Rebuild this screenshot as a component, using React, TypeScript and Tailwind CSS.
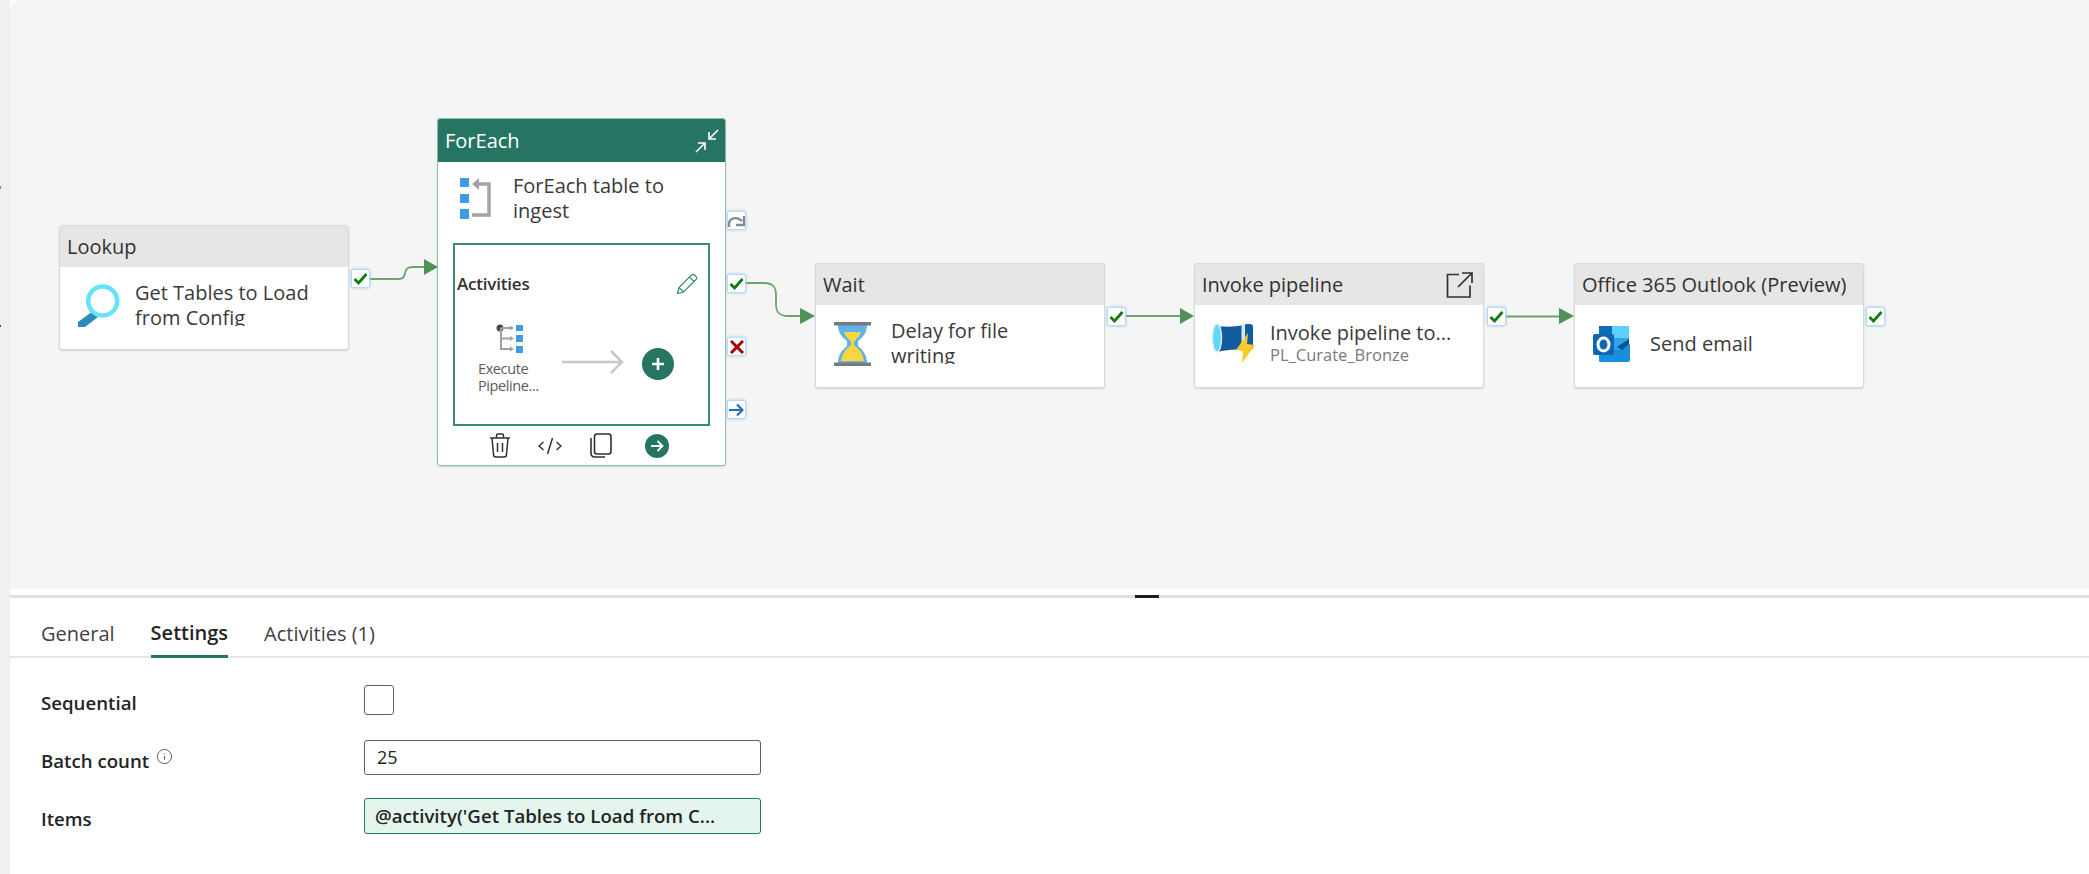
import type { ReactNode } from "react";
import { Info } from "lucide-react";

const font = "font-['Open_Sans','Liberation_Sans',sans-serif]";

function Port({ className, children }: { className: string; children: ReactNode }) {
  return (
    <div
      className={`absolute flex h-[19px] w-[19px] items-center justify-center rounded-[2px] border border-[#bcd9f2] bg-white shadow-[0_0_3px_#9cc5ee] ${className}`}
    >
      {children}
    </div>
  );
}

function CheckMark() {
  return (
    <svg width="15" height="13" viewBox="0 0 15 13">
      <path d="M1.5 7l4 4 8-9" fill="none" stroke="#107c10" strokeWidth="2.8" />
    </svg>
  );
}

function NodeCard({
  className,
  title,
  action,
  children,
}: {
  className: string;
  title: string;
  action?: ReactNode;
  children: ReactNode;
}) {
  return (
    <div
      className={`absolute flex h-[125px] w-[290px] flex-col overflow-hidden rounded-[3px] border border-[#d9d9d9] bg-white shadow-[0_1px_2px_rgba(0,0,0,0.14)] ${className}`}
    >
      <div className="flex h-[41px] shrink-0 items-center justify-between bg-[#e6e6e6] pl-[7px] pr-[10px] text-[20px] text-[#323130]">
        <span className="whitespace-nowrap">{title}</span>
        {action}
      </div>
      <div className="flex flex-1 items-start">{children}</div>
    </div>
  );
}

function NodeLabel({ children }: { children: ReactNode }) {
  return (
    <div className="h-[46px] w-[176px] overflow-hidden text-[20px] leading-[25px] text-[#3b3a39]">
      {children}
    </div>
  );
}

function LookupIcon() {
  return (
    <svg width="44" height="44" viewBox="0 0 44 44">
      <path d="M2 43v-5l15-11 5 6-13 10z" fill="#2a8dbb" />
      <circle cx="26.700" cy="17" r="14.500" fill="none" stroke="#66e3fb" strokeWidth="4.500" />
    </svg>
  );
}

function WaitIcon() {
  return (
    <svg width="37" height="44" viewBox="0 0 37 44">
      <path d="M4 3h29c0 8-4 12-9 16v5c5 4 9 9 9 17H4c0-8 4-13 9-17v-5C8 15 4 11 4 3z" fill="#5fb3ee" />
      <path d="M10 10h17c-1 4-5 7-7 10v3c3 3 9 7 10 16H7c1-9 7-13 10-16v-3c-2-3-6-6-7-10z" fill="#fdd63d" />
      <rect x="0" y="0" width="37" height="3.500" fill="#7a7a7a" />
      <rect x="0" y="40.500" width="37" height="3.500" fill="#7a7a7a" />
    </svg>
  );
}

function PipelineIcon() {
  return (
    <svg width="46" height="44" viewBox="0 0 46 44">
      <rect x="33" y="2" width="9" height="26" rx="3" fill="#0f5ea3" />
      <path d="M6 4c9 1 18 1 26-1v25c-8-1-17 0-26 2z" fill="#125b9f" />
      <rect x="30.500" y="1.500" width="3.500" height="27" rx="1.500" fill="#dbe8f2" />
      <ellipse cx="6" cy="16" rx="4.500" ry="14" fill="#5ed8f8" stroke="#dcebf5" strokeWidth="1.500" />
      <path d="M37 11L25 28l7 1-1 12 13-18-8-1z" fill="#fcc92c" />
    </svg>
  );
}

function OutlookIcon() {
  return (
    <svg width="37" height="38" viewBox="0 0 37 38">
      <rect x="6" y="1" width="26" height="36" rx="2" fill="#1a86d8" />
      <rect x="6" y="1" width="13" height="12" fill="#0f6cbd" />
      <rect x="19" y="1" width="17" height="12" fill="#5cd1fb" />
      <rect x="19" y="13" width="17" height="12" fill="#2da5ec" />
      <path d="M6 20l15 8 16-9v16a2 2 0 0 1-2 2H8a2 2 0 0 1-2-2z" fill="#1490df" />
      <path d="M36 19v-5l-12 8 5 3z" fill="#0a4e8c" />
      <rect x="0" y="9" width="21" height="21" rx="2" fill="#0f66b5" />
      <ellipse cx="10.500" cy="19.500" rx="5.500" ry="6.500" fill="none" stroke="#fff" strokeWidth="3" />
    </svg>
  );
}

function ForEachIcon() {
  return (
    <svg width="31" height="42" viewBox="0 0 31 42">
      <rect x="0" y="0" width="9" height="9" fill="#3f9ae8" />
      <rect x="0" y="16" width="9" height="9" fill="#3f9ae8" />
      <rect x="0" y="31" width="9" height="10" fill="#3f9ae8" />
      <path d="M14 6h15v31H12" fill="none" stroke="#a3a3a3" strokeWidth="3.500" />
      <path d="M19 0l-7 6 7 6z" fill="#a3a3a3" />
    </svg>
  );
}

function ExecuteIcon() {
  return (
    <svg width="27" height="29" viewBox="0 0 27 29">
      <circle cx="4" cy="4" r="3.500" fill="#4a4a4a" />
      <path d="M5 4v21h11M5 4h11M5 14.500h11" fill="none" stroke="#a0a0a0" strokeWidth="2" />
      <path d="M14 1.500l4 2.500-4 2.500zM14 12l4 2.500-4 2.500zM14 22.500l4 2.500-4 2.500z" fill="#a0a0a0" />
      <rect x="20" y="1" width="7" height="6" fill="#3f9ae8" />
      <rect x="20" y="11" width="7" height="7" fill="#3f9ae8" />
      <rect x="20" y="22" width="7" height="7" fill="#3f9ae8" />
    </svg>
  );
}

function ForEachNode() {
  return (
    <div className="absolute left-[427px] top-[118px] flex h-[348px] w-[289px] flex-col overflow-hidden rounded-[3px] border border-[#8dbcb0] bg-white shadow-[0_1px_2px_rgba(0,0,0,0.14)]">
      <div className="flex h-[43px] shrink-0 items-center justify-between bg-[#267563] pl-[7px] pr-[5px] text-[20px] text-white">
        <span>ForEach</span>
        <svg width="26" height="26" viewBox="0 0 26 26" fill="none" stroke="#fff" strokeWidth="1.600">
          <path d="M15 11l9-9M15 4v7h7M11 15l-9 9M4 15h7v7" />
        </svg>
      </div>
      <div className="flex h-[81px] shrink-0 items-start pl-[22px] pt-[16px]">
        <ForEachIcon />
        <div className="-mt-[5px] ml-[22px] w-[190px] text-[20px] leading-[25px] text-[#3b3a39]">
          ForEach table to ingest
        </div>
      </div>
      <div className="mx-[15px] flex h-[183px] shrink-0 flex-col border-2 border-[#3d8a78] px-[2px]">
        <div className="mt-[26px] flex items-center justify-between pr-[8px]">
          <span className="text-[17px] font-semibold tracking-[-0.2px] text-[#323130]">Activities</span>
          <svg width="22" height="22" viewBox="0 0 22 22" fill="none" stroke="#3d8a78" strokeWidth="1.200">
            <path d="M1.500 20.500l1.500-6L15.500 2a2 2 0 0 1 3 0l1.500 1.500a2 2 0 0 1 0 3L7.500 19zM3 14.500L7.500 19M13.500 4l4.500 4.500" />
          </svg>
        </div>
        <div className="mt-[27px] flex items-center">
          <div className="ml-[21px] flex w-[72px] flex-col">
            <div className="ml-[18px]">
              <ExecuteIcon />
            </div>
            <div className="mt-[7px] whitespace-nowrap text-[14.500px] leading-[17px] tracking-[-0.4px] text-[#5c5c5c]">
              Execute
              <br />
              Pipeline...
            </div>
          </div>
          <svg className="ml-[11px] mt-[6px]" width="64" height="26" viewBox="0 0 64 26" fill="none" stroke="#c8c8c8" strokeWidth="2.500">
            <path d="M1 13h60M50 2l11 11-11 11" />
          </svg>
          <div className="ml-[17px] mt-[10px] flex h-[32px] w-[32px] items-center justify-center rounded-full bg-[#267563]">
            <svg width="16" height="16" viewBox="0 0 16 16" stroke="#fff" strokeWidth="2.600">
              <path d="M8 2v12M2 8h12" />
            </svg>
          </div>
        </div>
      </div>
      <div className="flex flex-1 items-center pl-[51px]">
        <svg width="22" height="25" viewBox="0 0 22 25" fill="none" stroke="#323130" strokeWidth="1.500">
          <path d="M1 5h20M7.500 5V2.500a1.500 1.500 0 0 1 1.500-1.500h4a1.500 1.500 0 0 1 1.500 1.500V5M3 5l1.500 16.500a2.500 2.500 0 0 0 2.500 2.500h8a2.500 2.500 0 0 0 2.500-2.500L19 5M8.500 10v9M13.500 10v9" />
        </svg>
        <svg className="ml-[27px]" width="24" height="18" viewBox="0 0 24 18" fill="none" stroke="#323130" strokeWidth="1.500">
          <path d="M5.500 5L1 9l4.500 4M18.500 5L23 9l-4.500 4M14.500 1l-5 16" />
        </svg>
        <svg className="ml-[28px]" width="22" height="25" viewBox="0 0 22 25" fill="none" stroke="#323130" strokeWidth="1.600">
          <rect x="4.500" y="1" width="16.500" height="20" rx="2.500" />
          <path d="M1 5v15.500A3.500 3.500 0 0 0 4.500 24H15" />
        </svg>
        <div className="ml-[33px] flex h-[24px] w-[24px] items-center justify-center rounded-full bg-[#267563]">
          <svg width="14" height="14" viewBox="0 0 14 14" fill="none" stroke="#fff" strokeWidth="1.800">
            <path d="M1 7h11M7.500 2l5 5-5 5" />
          </svg>
        </div>
      </div>
    </div>
  );
}

function Connectors() {
  return (
    <svg className="absolute left-0 top-0" width="2079" height="589" viewBox="0 0 2079 589" fill="none">
      <g stroke="#6aa56f" strokeWidth="1.800">
        <path d="M359 279h27c8 0 8-2 9-6 1-4 2-6 8-6h12" />
        <path d="M735 283h19c9 0 12 4 12 12v9c0 8 3 12 12 12h13" />
        <path d="M1115 316h57" />
        <path d="M1495 316.500h56" />
      </g>
      <g fill="#4f9157">
        <path d="M414 259l14 8-14 8z" />
        <path d="M790 308l15 8-15 8z" />
        <path d="M1170 308l14 8-14 8z" />
        <path d="M1549 308l15 8-15 8z" />
      </g>
    </svg>
  );
}

function Canvas() {
  return (
    <div className="relative h-[589px] shrink-0 rounded-tl-[12px] bg-[#f5f5f5]">
      <Connectors />
      <NodeCard className="left-[49px] top-[225px]" title="Lookup">
        <div className="ml-[16px] mt-[17px]">
          <LookupIcon />
        </div>
        <div className="ml-[15px] mt-[13px]">
          <NodeLabel>Get Tables to Load from Config</NodeLabel>
        </div>
      </NodeCard>
      <Port className="left-[341px] top-[269px]">
        <CheckMark />
      </Port>

      <ForEachNode />
      <Port className="left-[717px] top-[211px]">
        <svg width="17" height="14" viewBox="0 0 17 14" fill="none" stroke="#8a8a8a" strokeWidth="2.400">
          <path d="M1 13V10c0-6 8-8 13-3M16 2v9h-8" />
        </svg>
      </Port>
      <Port className="left-[717px] top-[274px]">
        <CheckMark />
      </Port>
      <Port className="left-[717px] top-[337px]">
        <svg width="14" height="14" viewBox="0 0 14 14" stroke="#a80000" strokeWidth="3">
          <path d="M1 1l12 12M13 1L1 13" />
        </svg>
      </Port>
      <Port className="left-[717px] top-[400px]">
        <svg width="15" height="14" viewBox="0 0 15 14" fill="none" stroke="#1f6fc0" strokeWidth="2.200">
          <path d="M0 7h13M8 1.500L13.500 7 8 12.500" />
        </svg>
      </Port>

      <NodeCard className="left-[805px] top-[263px]" title="Wait">
        <div className="ml-[18px] mt-[17px]">
          <WaitIcon />
        </div>
        <div className="ml-[20px] mt-[13px]">
          <NodeLabel>Delay for file writing</NodeLabel>
        </div>
      </NodeCard>
      <Port className="left-[1097px] top-[307px]">
        <CheckMark />
      </Port>

      <NodeCard
        className="left-[1184px] top-[263px]"
        title="Invoke pipeline"
        action={
          <svg width="27" height="26" viewBox="0 0 27 26" fill="none" stroke="#323130" strokeWidth="1.700">
            <path d="M13 2.500H1.500v22.500h22.500V13.500M12 15L25.500 1.500M16 1h10v10" />
          </svg>
        }
      >
        <div className="ml-[16px] mt-[17px]">
          <PipelineIcon />
        </div>
        <div className="ml-[13px] mt-[15px]">
          <div className="whitespace-nowrap text-[20px] leading-[25px] text-[#3b3a39]">Invoke pipeline to...</div>
          <div className="text-[16.500px] leading-[20px] text-[#7a7a7a]">PL_Curate_Bronze</div>
        </div>
      </NodeCard>
      <Port className="left-[1477px] top-[307px]">
        <CheckMark />
      </Port>

      <NodeCard className="left-[1564px] top-[263px]" title="Office 365 Outlook (Preview)">
        <div className="ml-[18px] mt-[20px]">
          <OutlookIcon />
        </div>
        <div className="ml-[20px] mt-[26px] text-[20px] leading-[25px] text-[#3b3a39]">Send email</div>
      </NodeCard>
      <Port className="left-[1856px] top-[307px]">
        <CheckMark />
      </Port>
    </div>
  );
}

function SettingRow({ label, info, children }: { label: string; info?: boolean; children: ReactNode }) {
  return (
    <div className="flex items-center">
      <div className="flex h-[30px] w-[323px] items-center pt-[6px] text-[18.670px] font-semibold text-[#242424]">
        {label}
        {info && <Info size={17} strokeWidth={1.200} className="mb-[8px] ml-[7px] text-[#424242]" />}
      </div>
      {children}
    </div>
  );
}

function BottomPanel() {
  return (
    <div className="flex flex-1 flex-col bg-white">
      <div className="relative mt-[6px] h-[3px] bg-[#e0e0e0]">
        <div className="absolute left-[1125px] top-0 h-[3px] w-[24px] bg-[#1f1f1f]" />
      </div>
      <div className="flex h-[60px] items-start gap-[36px] border-b-2 border-[#e6e6e6] pl-[31px] text-[20px] text-[#424242]">
        <div className="flex h-[58px] items-center pt-[13px]">General</div>
        <div className="flex h-[60px] items-center border-b-[3px] border-[#267563] pt-[13px] font-semibold text-[#242424]">
          Settings
        </div>
        <div className="flex h-[58px] items-center pt-[13px]">Activities (1)</div>
      </div>
      <div className="flex flex-col pl-[31px] pt-[27px]">
        <SettingRow label="Sequential">
          <div className="h-[30px] w-[30px] rounded-[3px] border border-[#616161]" />
        </SettingRow>
        <div className="mt-[25px]">
          <SettingRow label="Batch count" info>
            <div className="flex h-[35px] w-[397px] items-center rounded-[3px] border border-[#616161] pl-[12px] text-[18px] text-[#242424]">
              25
            </div>
          </SettingRow>
        </div>
        <div className="mt-[23px]">
          <SettingRow label="Items">
            <div className="flex h-[36px] w-[397px] items-center rounded-[3px] border border-[#267563] bg-[#e3f5ec] pl-[10px] text-[18.670px] font-semibold text-[#242424]">
              @activity('Get Tables to Load from C...
            </div>
          </SettingRow>
        </div>
      </div>
    </div>
  );
}

export default function App() {
  return (
    <div className={`flex h-[874px] w-[2089px] overflow-hidden bg-[#f0f0f0] ${font}`}>
      <div className="relative w-[10px] shrink-0">
        <div className="absolute left-0 top-[186px] h-[3px] w-[1px] bg-[#3aa0e8]" />
        <div className="absolute left-0 top-[325px] h-[2px] w-[1px] bg-[#1a4fa0]" />
      </div>
      <div className="flex min-w-0 flex-1 flex-col bg-white">
        <Canvas />
        <BottomPanel />
      </div>
    </div>
  );
}
